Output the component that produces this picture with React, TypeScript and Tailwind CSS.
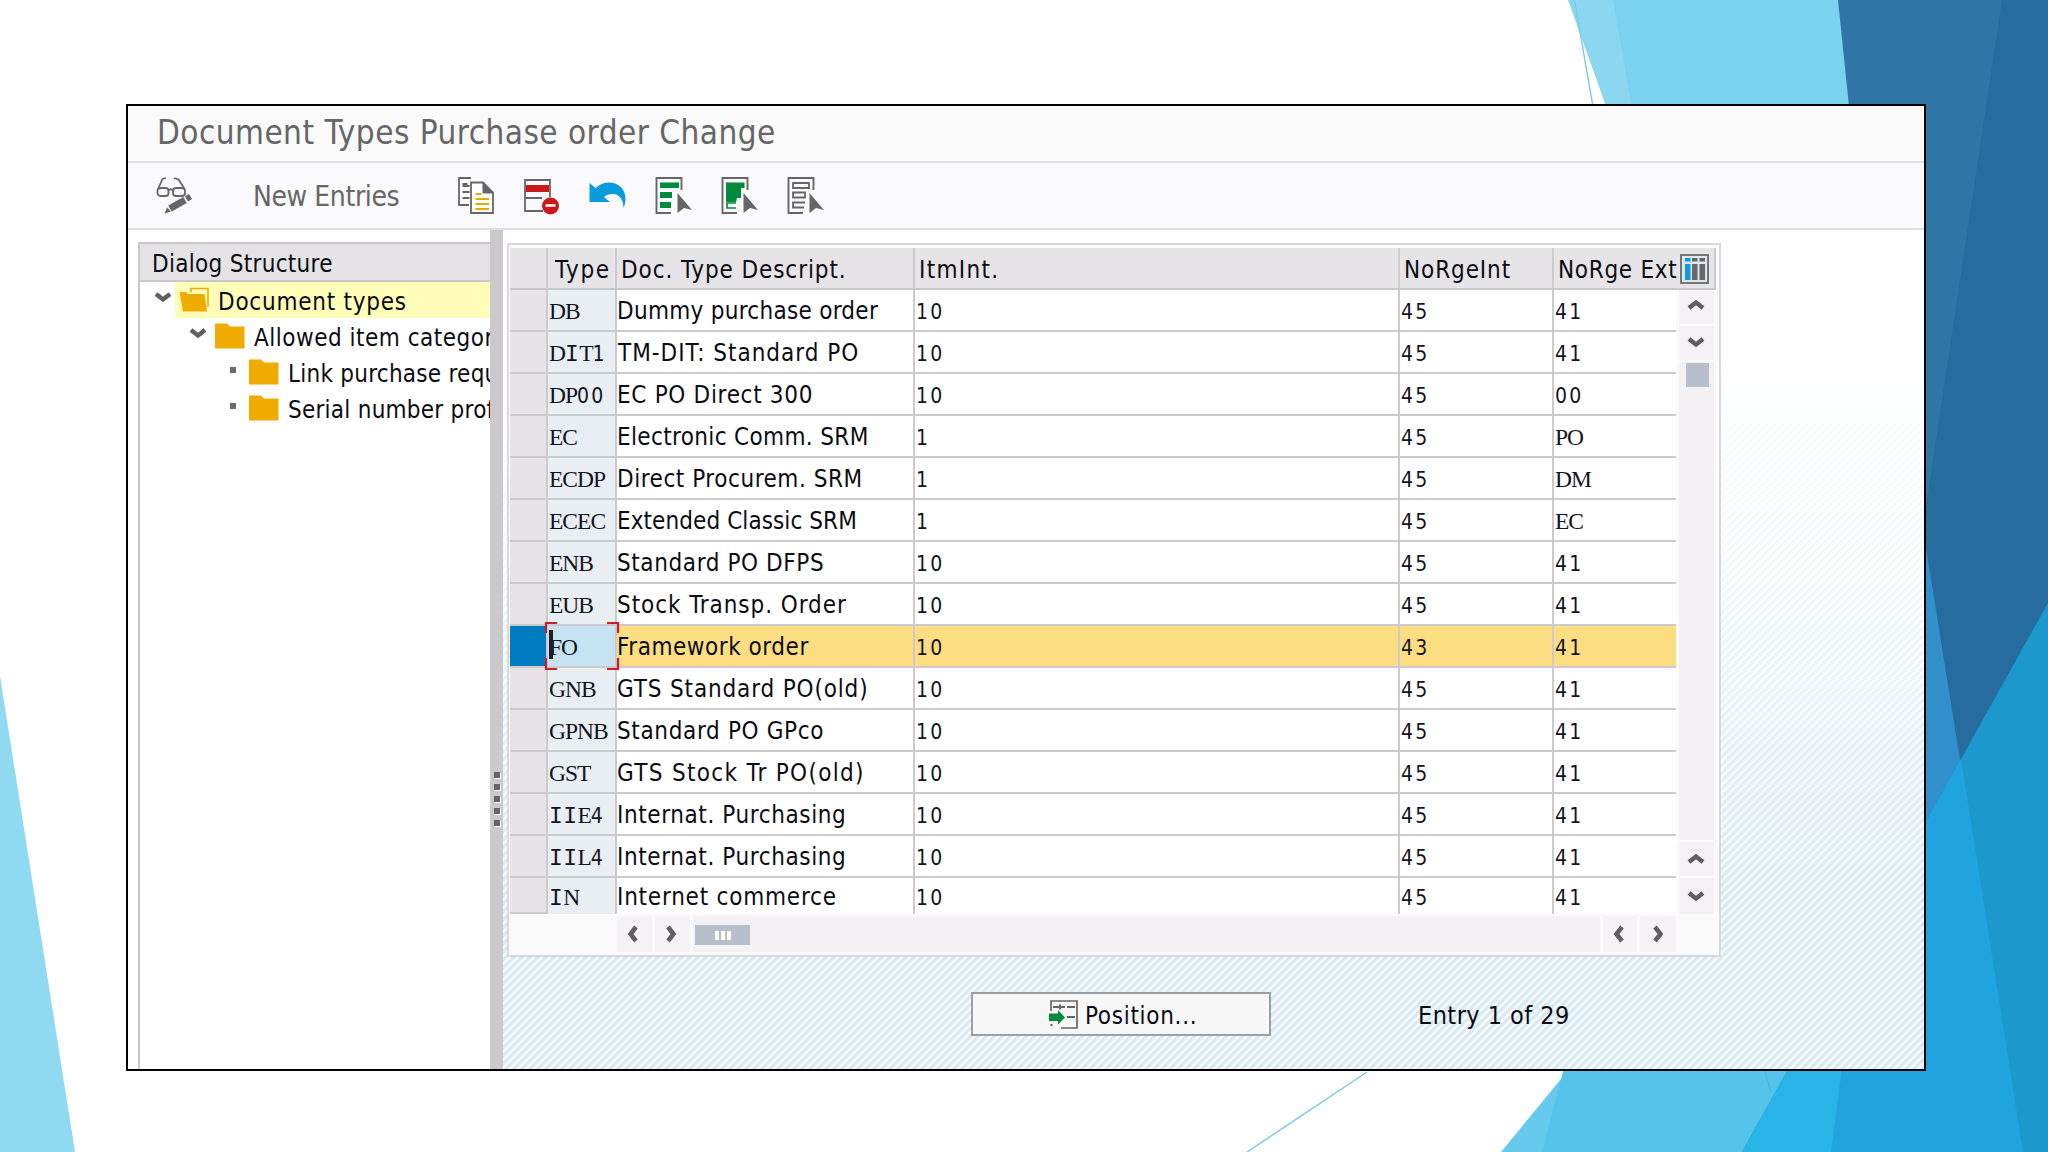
// App.tsx

import React from 'react';
import clsx from 'clsx';

interface DocType {
  type: string;
  description: string;
  tracking: string;
  itemInterval: string;
  rangeInt: string;
  rangeExt: string;
}

const docTypes: DocType[] = [
  { type: 'DB', description: 'Dummy purchase order', tracking: 'tracking-[0.28px]', itemInterval: '10', rangeInt: '45', rangeExt: '41' },
  { type: 'DIT1', description: 'TM-DIT: Standard PO', tracking: 'tracking-[1px] pl-px', itemInterval: '10', rangeInt: '45', rangeExt: '41' },
  { type: 'DP00', description: 'EC PO Direct 300', tracking: 'tracking-[0.69px]', itemInterval: '10', rangeInt: '45', rangeExt: '00' },
  { type: 'EC', description: 'Electronic Comm. SRM', tracking: 'tracking-[0.35px]', itemInterval: '1', rangeInt: '45', rangeExt: 'PO' },
  { type: 'ECDP', description: 'Direct Procurem. SRM', tracking: 'tracking-[0.54px]', itemInterval: '1', rangeInt: '45', rangeExt: 'DM' },
  { type: 'ECEC', description: 'Extended Classic SRM', tracking: 'tracking-[0.08px]', itemInterval: '1', rangeInt: '45', rangeExt: 'EC' },
  { type: 'ENB', description: 'Standard PO DFPS', tracking: 'tracking-[0.6px]', itemInterval: '10', rangeInt: '45', rangeExt: '41' },
  { type: 'EUB', description: 'Stock Transp. Order', tracking: 'tracking-[0.93px]', itemInterval: '10', rangeInt: '45', rangeExt: '41' },
  { type: 'FO', description: 'Framework order', tracking: 'tracking-[0.54px]', itemInterval: '10', rangeInt: '43', rangeExt: '41' },
  { type: 'GNB', description: 'GTS Standard PO(old)', tracking: 'tracking-[0.85px]', itemInterval: '10', rangeInt: '45', rangeExt: '41' },
  { type: 'GPNB', description: 'Standard PO GPco', tracking: 'tracking-[0.65px]', itemInterval: '10', rangeInt: '45', rangeExt: '41' },
  { type: 'GST', description: 'GTS Stock Tr PO(old)', tracking: 'tracking-[1.32px]', itemInterval: '10', rangeInt: '45', rangeExt: '41' },
  { type: 'IIE4', description: 'Internat. Purchasing', tracking: 'tracking-[0.6px]', itemInterval: '10', rangeInt: '45', rangeExt: '41' },
  { type: 'IIL4', description: 'Internat. Purchasing', tracking: 'tracking-[0.6px]', itemInterval: '10', rangeInt: '45', rangeExt: '41' },
  { type: 'IN', description: 'Internet commerce', tracking: 'tracking-[0.78px]', itemInterval: '10', rangeInt: '45', rangeExt: '41' },
];

const SELECTED = 'FO';

const SlideBackground = () => (
  <svg className="absolute inset-0" width="2048" height="1152" viewBox="0 0 2048 1152">
    <polygon points="0,676 0,1152 75,1152" fill="#90daf1" />
    {/* top right */}
    <polygon points="1568,0 1854,0 1854,120 1611,120" fill="#8bd7f0" />
    <polygon points="1613,0 1860,0 1860,120 1634,120" fill="#7bd1f0" />
    <polygon points="1838,0 2048,0 2048,1152 1900,1152 1900,600" fill="#2f75a6" />
    <polygon points="2002,0 2048,0 2048,700 1960,1152 1900,1152 1900,680" fill="#266c9e" />
    {/* bottom right */}
    <polygon points="1570,1068 1850,1068 1850,1152 1501,1152" fill="#66c9ee" />
    <polygon points="1564,1068 1850,1068 1850,1152 1542,1152" fill="#56c3ea" />
    <polygon points="1910,450 1930.5,576 2023,1152 1900,1152" fill="#3190cc" />
    <polygon points="2048,603 2048,1152 1742,1152" fill="#1c98cd" />
    <polygon points="1961,759 2023,1152 1742,1152" fill="#1fa4de" />
    <polygon points="1789,1068 1842,1068 1831,1152 1742,1152" fill="#29b4e7" />
    <path d="M1765 1071l6 22" stroke="#48b5de" fill="none" />
    <path d="M1574.5 0L1592.5 104M1367 1072L1247 1152" stroke="#74cbe5" strokeWidth="1.4" fill="none" />
  </svg>
);

const GlassesPencilIcon = () => (
  <svg width="40" height="40" viewBox="0 0 40 40" fill="none" stroke="#666" strokeWidth="1.8">
    <path d="M10 2L6.500 3 2.500 12M18 2l4.500 1.500L28 12" />
    <rect x="1.500" y="12" width="11" height="8" rx="3" />
    <rect x="17" y="12" width="12" height="8" rx="3" />
    <path d="M12.500 14.500q2.300-2.500 4.500 0" />
    <path d="M14 32.500L29 24" strokeWidth="7" />
    <path d="M30.500 23l4-2.500" strokeWidth="6" />
    <path d="M8.500 37.500l2.500-6 4 4z" fill="#666" stroke="none" />
  </svg>
);

const CopyIcon = () => (
  <svg width="40" height="40" viewBox="0 0 40 40" fill="none" stroke="#666" strokeWidth="1.8">
    <path d="M14 2H2v27h10M5.500 8h5M5.500 10h7M5.500 16h7M5.500 22h7" />
    <path d="M14 6.500h12l10 10V37H14z" fill="#fff" />
    <path d="M25.500 6l11 11.500h-11z" fill="#666" stroke="none" />
    <path d="M18.500 18h6M18.500 23h13.500M18.500 28h13.500M18.500 33h13.500" stroke="#eaa700" />
  </svg>
);

const DeleteIcon = () => (
  <svg width="40" height="40" viewBox="0 0 40 40" fill="none">
    <path d="M20 35H2V4h25v17M2 22h17" stroke="#666" strokeWidth="1.800" />
    <rect x="3" y="9" width="23" height="7" fill="#cc171b" />
    <circle cx="27.500" cy="30" r="8.500" fill="#cc171b" />
    <path d="M22.500 29.500h10" stroke="#fff" strokeWidth="2.500" />
  </svg>
);

const UndoIcon = () => (
  <svg width="40" height="40" viewBox="0 0 40 40" fill="#0a9ade">
    <path d="M0.500 7l6 5C13 6.500 20 5.500 26 7.500c9 3 13.500 13.500 8.500 24.500 0-7-3-13-9.500-14-5-.5-8 1-10 3l6 5H.5z" />
  </svg>
);

const SelectIcon = ({ mode }: { mode: 'all' | 'block' | 'none' }) => (
  <svg width="40" height="40" viewBox="0 0 40 40" fill="none">
    <path d="M16 37H1.500V2H26.500v12" stroke="#666" strokeWidth="1.900" />
    {mode === 'all' && (
      <path d="M5 6.500h19v5.500H5zM5 16h12v6H5zM5 26h11v6H5z" fill="#008a3b" />
    )}
    {mode === 'block' && (
      <>
        <path d="M5 6.500h18.500V12H20v10h-4l-1 4H5z" fill="#008a3b" />
        <path d="M15 27H6v5h9" stroke="#008a3b" strokeWidth="1.700" />
      </>
    )}
    {mode === 'none' && (
      <path d="M6 7h16v5H6zM18 21.500H6v-5h12zM17 31.500H6v-5h12" stroke="#666" strokeWidth="1.800" />
    )}
    <path d="M22.500 17L37 34l-8-2-6.500 5z" fill="#666" />
  </svg>
);

const LayoutIcon = () => (
  <svg width="29" height="30" viewBox="0 0 29 30">
    <rect x="1" y="1" width="27" height="28" fill="#dde6ec" stroke="#6a6a6a" strokeWidth="1.800" />
    <path d="M5 4h5.500v3.500H5zM5 10h5.500v16H5z" fill="#0f9be0" />
    <path d="M12 4h5.500v3.500H12zM19.500 4H25v3.500h-5.500zM12 10h5.500v16H12zM19.500 10H25v16h-5.500z" fill="#666" />
  </svg>
);

const PositionIcon = () => (
  <svg width="30" height="30" viewBox="0 0 30 30" fill="none">
    <path d="M2 12V2h26v27H12" stroke="#666" strokeWidth="1.700" />
    <path d="M4 8h12M18 8h8M18 18h8" stroke="#666" strokeWidth="1.900" />
    <path d="M11 5.500v5M1.500 26h2" stroke="#666" strokeWidth="2" />
    <path d="M0 14.500h9V11l7 7.500-7 7V22H0z" fill="#008a3b" />
  </svg>
);

const Folder = ({ open }: { open?: boolean }) => (
  <svg className="shrink-0" width="31" height="26" viewBox="0 0 31 26">
    {open ? (
      <>
        <path d="M12 5V1.500h17V20" fill="none" stroke="#f0ab00" strokeWidth="1.600" />
        <path d="M0.500 5H7l2 2h16.500L28 24.500H4z" fill="#f0ab00" />
      </>
    ) : (
      <path d="M0 .5h12l3 3h14.500v22H0z" fill="#f0ab00" />
    )}
  </svg>
);

const rotations = {
  down: 'rotate-0',
  up: 'rotate-180',
  left: 'rotate-90',
  right: '-rotate-90',
};

const Chevron = ({ dir }: { dir: keyof typeof rotations }) => (
  <svg className={clsx('shrink-0', rotations[dir])} width="18" height="12" viewBox="0 0 18 12">
    <path d="M2 3l7 5.500L16 3" fill="none" stroke="#5f5f5f" strokeWidth="4.500" />
  </svg>
);

const Code = ({ children }: { children: string }) => (
  <span className="whitespace-nowrap font-['Liberation_Serif',serif] text-[23.5px] leading-[36px] -tracking-[1px] text-[#14141e]">
    {children.split(/(\d+|I+)/).filter(Boolean).map((part, i) => {
      if (/\d/.test(part)) {
        return <span key={i} className="font-['DejaVu_Sans_Condensed','DejaVu_Sans',sans-serif] text-[21px] tracking-[2.15px]">{part}</span>;
      }
      if (part[0] === 'I') {
        return <span key={i} className="font-['Liberation_Mono',monospace] text-[23px] tracking-[0.4px]">{part}</span>;
      }
      return part;
    })}
  </span>
);

const TypeFocus = () => (
  <svg className="absolute -left-[4px] -top-[5px] z-10" width="76" height="50" viewBox="0 0 76 50" fill="none">
    <path d="M13 2H2v10M63 2h11v10M13 48H2V37M63 48h11V37" stroke="#d01c24" strokeWidth="2.200" />
    <path d="M7 9v29" stroke="#2a1c1c" strokeWidth="4" />
  </svg>
);

const Row = ({ row, last }: { row: DocType; last: boolean }) => {
  const selected = row.type === SELECTED;
  const cell = clsx('flex', last ? 'pt-px' : 'pt-[3px] border-b-2', 'border-[#cccacd]', selected ? 'bg-[#fddd82]' : 'bg-white');
  return (
    <div className={clsx('flex', last ? 'h-[36px]' : 'h-[42px]')}>
      <div className={clsx('w-[38px] border-r-2 border-b-2 border-[#cccacd]', selected ? 'bg-[#007ac0]' : 'bg-[#e6e4e6]')} />
      <div className={clsx('relative w-[69px] border-r-2 border-[#cccacd] flex pl-px', last ? 'pt-px' : 'pt-[3px] border-b-2', selected ? 'bg-[#c5e3f2]' : 'bg-[#e9eef2]')}>
        <Code>{row.type}</Code>
        {selected && <TypeFocus />}
      </div>
      <div className={clsx(cell, 'w-[298px] border-r-2 text-[24px] leading-[37px]')}>
        <span className={row.tracking}>{row.description}</span>
      </div>
      <div className={clsx(cell, 'w-[485px] border-r-2 pl-px')}><Code>{row.itemInterval}</Code></div>
      <div className={clsx(cell, 'w-[154px] border-r-2 pl-px')}><Code>{row.rangeInt}</Code></div>
      <div className={clsx(cell, 'w-[122px] pl-px')}><Code>{row.rangeExt}</Code></div>
    </div>
  );
};

const DialogStructure = () => (
  <div className="w-[362px] shrink-0 bg-white pl-[10px] pt-[12px]">
    <div className="h-full overflow-hidden border-l-2 border-t-2 border-[#c9c7ca]">
      <div className="h-[38px] border-b-2 border-[#c9c7ca] bg-[#e5e3e5] pl-[12px] text-[24px] leading-[40px] tracking-[0.3px]">Dialog Structure</div>
      <div className="flex h-[36px] items-center whitespace-nowrap text-[24px]">
        <div className="flex w-[35px] justify-end pb-[6px] pr-[3px]"><Chevron dir="down" /></div>
        <div className="flex h-full flex-1 items-center bg-[#fffdb8] pl-[4px]">
          <Folder open />
          <span className="pl-[8px] pt-[3px] tracking-[0.76px]">Document types</span>
        </div>
      </div>
      <div className="flex h-[36px] items-center whitespace-nowrap pl-[49px] text-[24px]">
        <div className="mr-[8px] pb-[6px]"><Chevron dir="down" /></div>
        <Folder />
        <span className="pl-[8px] pt-[3px] tracking-[0.5px]">Allowed item categor</span>
      </div>
      <div className="flex h-[36px] items-center whitespace-nowrap pl-[90px] text-[24px]">
        <div className="mb-[4px] mr-[13px] size-[6px] shrink-0 bg-[#6b6b6b]" />
        <Folder />
        <span className="pl-[8px] pt-[3px] tracking-[0.25px]">Link purchase requ</span>
      </div>
      <div className="flex h-[36px] items-center whitespace-nowrap pl-[90px] text-[24px]">
        <div className="mb-[4px] mr-[13px] size-[6px] shrink-0 bg-[#6b6b6b]" />
        <Folder />
        <span className="pl-[8px] pt-[3px] tracking-[0.25px]">Serial number prof</span>
      </div>
    </div>
  </div>
);

const VerticalScroll = () => (
  <div className="flex h-[624px] w-[40px] flex-col items-center bg-[#fafafb]">
    <div className="flex h-[34px] w-[35px] items-center justify-center bg-[#f4f2f4] pb-[4px]"><Chevron dir="up" /></div>
    <div className="mt-[2px] flex h-[34px] w-[35px] items-center justify-center bg-[#f4f2f4] pb-[2px]"><Chevron dir="down" /></div>
    <div className="mt-[2px] flex w-[35px] flex-1 justify-center bg-[#f3f1f3] pl-[2px] pt-px">
      <div className="h-[24px] w-[23px] bg-[#b7bfcc]" />
    </div>
    <div className="mt-[2px] flex h-[34px] w-[35px] items-center justify-center bg-[#f4f2f4]"><Chevron dir="up" /></div>
    <div className="mt-[2px] flex h-[36px] w-[35px] items-center justify-center bg-[#f4f2f4]"><Chevron dir="down" /></div>
  </div>
);

const HorizontalScroll = () => (
  <div className="ml-[107px] mt-[2px] flex h-[36px] w-[1059px] items-center gap-[3px]">
    <div className="flex h-full w-[35px] items-center justify-center bg-[#f4f2f4] pb-px pr-[3px]"><Chevron dir="left" /></div>
    <div className="flex h-full w-[35px] items-center justify-center bg-[#f4f2f4] pb-px pr-[3px]"><Chevron dir="right" /></div>
    <div className="flex h-full flex-1 items-center bg-[#f3f1f3] pl-[2px] pt-[2px]">
      <div className="flex h-[20px] w-[55px] items-center justify-center gap-[2px] bg-[#b7bfcc]">
        <i className="h-[9px] w-[4px] bg-white" />
        <i className="h-[9px] w-[4px] bg-white" />
        <i className="h-[9px] w-[4px] bg-white" />
      </div>
    </div>
    <div className="flex h-full w-[34px] items-center justify-center bg-[#f4f2f4] pb-px pr-[3px]"><Chevron dir="left" /></div>
    <div className="flex h-full w-[36px] items-center justify-center bg-[#f4f2f4] pb-px"><Chevron dir="right" /></div>
  </div>
);

const DocumentTable = () => (
  <div className="h-[714px] w-[1214px] border-2 border-[#d9d9dc] bg-[#fafafb] pl-px pt-[3px]">
    <div className="flex h-[42px] w-[1206px] border-b-2 border-r-2 border-[#c9c7ca] bg-[#e6e4e6] text-[24px] leading-[44px]">
      <div className="w-[38px] border-r-2 border-[#cccacd]" />
      <div className="w-[69px] border-r-2 border-[#cccacd] pl-[7px] tracking-[1.6px]">Type</div>
      <div className="w-[298px] border-r-2 border-[#cccacd] pl-[4px] tracking-[0.9px]">Doc. Type Descript.</div>
      <div className="w-[485px] border-r-2 border-[#cccacd] pl-[4px] tracking-[1.3px]">ItmInt.</div>
      <div className="w-[154px] border-r-2 border-[#cccacd] pl-[4px] tracking-[0.9px]">NoRgeInt</div>
      <div className="flex h-[40px] whitespace-nowrap pl-[4px] tracking-[0.7px]">
        <span className="w-[122px]">NoRge Ext</span>
        <div className="pt-[6px]"><LayoutIcon /></div>
      </div>
    </div>
    <div className="flex">
      <div>
        {docTypes.map((row, i) => (
          <Row key={row.type} row={row} last={i === docTypes.length - 1} />
        ))}
      </div>
      <VerticalScroll />
    </div>
    <HorizontalScroll />
  </div>
);

const App = () => {
  return (
    <div className="relative h-[1152px] w-[2048px] overflow-hidden bg-white pl-[126px] pt-[104px] font-['DejaVu_Sans_Condensed','DejaVu_Sans',sans-serif] text-[#0c0c14]">
      <SlideBackground />
      <div className="relative flex h-[967px] w-[1800px] flex-col border-2 border-black bg-white">
        <div className="h-[57px] shrink-0 border-b-2 border-[#e0dfe1] bg-[#fafafb] pl-[29px] text-[33px] leading-[54px] text-[#666]">
          <span className="tracking-[0.46px]">Document Types Purchase order Change</span>
        </div>
        <div className="flex h-[67px] shrink-0 items-center border-b-2 border-[#e0dfe1] bg-[#faf9fb] pl-[28px] text-[#666]">
          <GlassesPencilIcon />
          <span className="ml-[57px] w-[204px] whitespace-nowrap pt-[2px] text-[28px] leading-[40px] -tracking-[0.4px]">New Entries</span>
          <div className="flex gap-[26px]">
            <CopyIcon />
            <DeleteIcon />
            <UndoIcon />
            <SelectIcon mode="all" />
            <SelectIcon mode="block" />
            <SelectIcon mode="none" />
          </div>
        </div>
        <div className="flex min-h-0 flex-1">
          <DialogStructure />
          <div className="flex w-[13px] shrink-0 flex-col items-center gap-[6px] bg-[#cbc9cc] pt-[542px]">
            {[0, 1, 2, 3, 4].map((n) => (
              <i key={n} className="size-[6px] shrink-0 bg-[#666] shadow-[1px_1px_0_#fff]" />
            ))}
          </div>
          <div className="flex-1 bg-[linear-gradient(180deg,#fff_15%,#ffffffb0_42%,#ffffff00_80%),repeating-linear-gradient(135deg,#d8e9f2_0px,#daebf3_2.8px,#fcfeff_3.6px,#fcfeff_4.8px,#d8e9f2_5.657px)] pl-[4px] pt-[13px]">
            <DocumentTable />
            <div className="flex items-center pt-[35px]">
              <button className="ml-[464px] flex h-[44px] w-[300px] items-center border-2 border-[#9c9fa2] bg-[#f7f7f8] pl-[76px] text-[24px]">
                <PositionIcon />
                <span className="pl-[6px] pt-[3px] tracking-[0.7px]">Position...</span>
              </button>
              <span className="pl-[147px] pt-[3px] text-[25px] tracking-[0.45px]">Entry 1 of 29</span>
            </div>
          </div>
        </div>
      </div>
    </div>
  );
};

export default App;
